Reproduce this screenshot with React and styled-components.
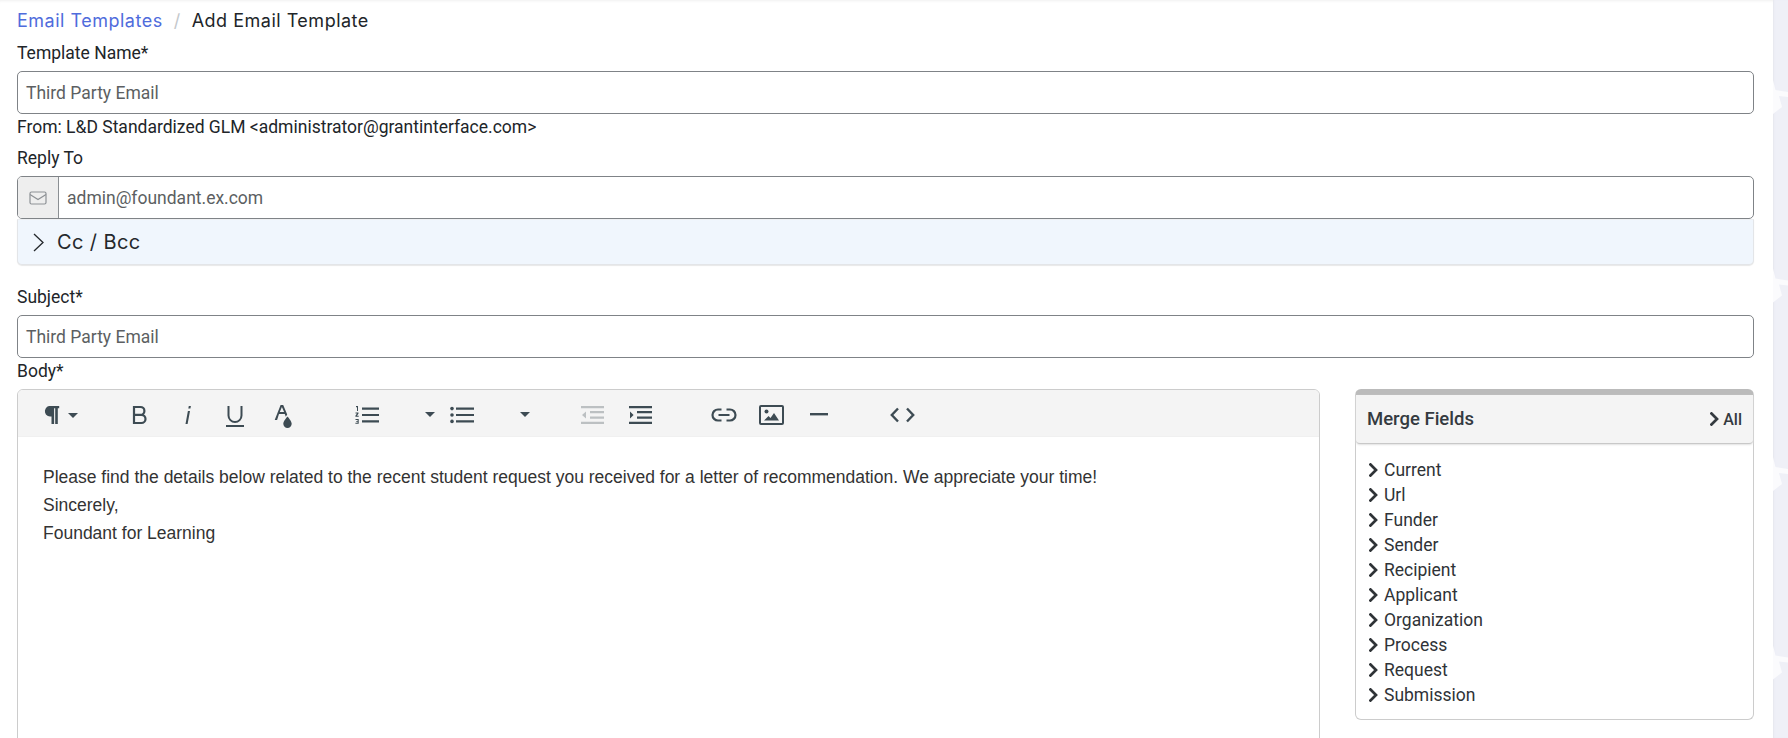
import React from "react";
import styled, { createGlobalStyle } from "styled-components";

const Global = createGlobalStyle`
  html, body { margin: 0; padding: 0; height: 738px; overflow: hidden; background: #fff; }
  #root { height: 738px; }
  * { box-sizing: border-box; }
`;

const Page = styled.div`
  display: flex;
  height: 738px;
  overflow: hidden;
  font-family: Roboto, sans-serif;
  font-size: 17.5px;
  color: #212529;
`;
const Main = styled.main`
  width: 1773px;
  flex: none;
  padding: 0 19px 0 17px;
  background: #fff;
  box-shadow: inset 0 3px 3px -2px #f0f0f0;
`;
const Side = styled.aside`
  flex: 1;
  background: #eff0f7;
  box-shadow: inset 2px 0 2px -1px #e6e7ee;
  line-height: 0;
`;
const Breadcrumb = styled.nav`
  display: flex;
  align-items: center;
  height: 41px;
  padding-bottom: 1px;
  font-family: Inter, sans-serif;
  font-size: 18px;
  letter-spacing: 0.5px;
`;
const Crumb = styled.span`
  color: ${(p) => (p.$link ? "#4f6cdc" : "#212529")};
`;
const Slash = styled.span`
  color: #c4c8cc;
  margin: 0 11px;
`;
const Label = styled.label`
  display: block;
  line-height: 24px;
  margin-bottom: ${(p) => p.$mb ?? 6}px;
`;
const Line = styled.div`
  line-height: 24px;
  margin: 1px 0 7px;
`;
const Input = styled.div`
  height: 43px;
  border: 1px solid #7f8387;
  border-radius: 5px;
  padding: 0 8px;
  display: flex;
  align-items: center;
  color: #5c5f62;
  background: #fff;
  margin-bottom: 1px;
`;
const Group = styled.div`
  display: flex;
  height: 43px;
  border: 1px solid #7f8387;
  border-radius: 5px;
  overflow: hidden;
`;
const Addon = styled.div`
  width: 41px;
  flex: none;
  background: #eeeeee;
  border-right: 1px solid #8b8f93;
  display: flex;
  align-items: center;
  justify-content: center;
`;
const GroupValue = styled.div`
  flex: 1;
  display: flex;
  align-items: center;
  padding: 0 8px;
  color: #5c5f62;
`;
const Collapse = styled.div`
  height: 46px;
  margin-bottom: 20px;
  background: #f0f6fd;
  border: 1px solid #e3e5e8;
  border-top-color: #eef0f3;
  border-radius: 0 0 5px 5px;
  box-shadow: 0 1px 1px #e8e8e8;
  display: flex;
  align-items: center;
  padding-left: 15px;
  gap: 13px;
  font-family: Inter, sans-serif;
  font-size: 20px;
  letter-spacing: 0.4px;
  color: #24282c;
`;
const Columns = styled.div`
  display: flex;
  align-items: flex-start;
`;
const Editor = styled.section`
  width: 1303px;
  flex: none;
  height: 400px;
  border: 1px solid #cccccc;
  border-radius: 6px 6px 0 0;
  margin-right: 35px;
`;
const Toolbar = styled.div`
  display: flex;
  height: 47px;
  padding: 3px 0 0 24px;
  background: #f4f4f4;
  border-radius: 5px 5px 0 0;
  border-bottom: 1px solid #f0f0f0;
  color: #3d4b53;
`;
const ToolGroup = styled.div`
  display: flex;
  margin-left: ${(p) => p.$ml}px;
`;
const Tool = styled.div`
  width: ${(p) => p.$w ?? 47.5}px;
  margin-left: ${(p) => p.$ml ?? 0}px;
  flex: none;
  display: flex;
  align-items: center;
  justify-content: center;
  color: ${(p) => (p.$off ? "#bcc0c2" : "inherit")};
`;
const EditorBody = styled.div`
  padding: 26px 25px 0;
  font-family: "Liberation Sans", Arial, sans-serif;
  font-size: 17.5px;
  line-height: 28px;
  color: #333;
`;
const Panel = styled.section`
  width: 399px;
  flex: none;
  height: 331px;
  border: 1px solid #cccccc;
  border-top: 6px solid #bbbbbb;
  border-radius: 6px;
  background: #fff;
`;
const PanelHeader = styled.header`
  height: 49px;
  background: #f4f4f4;
  border-bottom: 1px solid #c8c8c8;
  box-shadow: 0 1px 2px #e2e2e2;
  border-radius: 0 0 4px 4px;
  display: flex;
  align-items: center;
  justify-content: space-between;
  padding: 0 11px 0 11px;
`;
const PanelTitle = styled.h3`
  margin: 0;
  font-size: 18.5px;
  font-weight: 500;
  color: #343a40;
`;
const AllToggle = styled.span`
  display: flex;
  align-items: center;
  gap: 4px;
  font-size: 16px;
  font-weight: 500;
  color: #343a40;
`;
const FieldList = styled.ul`
  list-style: none;
  margin: 0;
  padding: 13px 0 0 13px;
`;
const FieldItem = styled.li`
  display: flex;
  align-items: center;
  height: 25px;
  gap: 6px;
  color: #2f3337;
`;

const Chevron = () => (
  <svg width="9" height="14" viewBox="0 0 9 14" fill="none" stroke="currentColor" strokeWidth="2.7" strokeLinecap="square">
    <path d="M1.5 1.5 7 7 1.5 12.5" />
  </svg>
);
const ThinChevron = () => (
  <svg width="11" height="19" viewBox="0 0 11 19" fill="none" stroke="currentColor" strokeWidth="1.3">
    <path d="M1 1l9 8.5L1 18" />
  </svg>
);
const Caret = () => (
  <svg width="10" height="5" viewBox="0 0 10 5" fill="currentColor"><path d="M0 0h10L5 5z" /></svg>
);
const Paragraph = () => (
  <svg width="36" height="24" viewBox="0 0 36 24" fill="currentColor">
    <path d="M7 3h10.2v2.2h-1.4V21h-2.6V5.2h-1.1V21H9.5v-7.6A5.3 5.3 0 0 1 7 3z" />
    <path d="M26 10h10l-5 5z" />
  </svg>
);
const Bold = () => (
  <svg width="24" height="24" viewBox="0 0 24 24" fill="none" stroke="currentColor" strokeWidth="2.2">
    <path d="M6 4h6.5a3.9 3.9 0 0 1 0 7.8H6zM6 11.8h7.4a4 4 0 0 1 0 8.2H6z" />
  </svg>
);
const Italic = () => (
  <svg width="24" height="24" viewBox="0 0 24 24" fill="currentColor">
    <path d="M12.8 3h2.1l-.5 2.4h-2.1zM11.9 8h2.1l-2.4 13H9.5z" />
  </svg>
);
const Underline = () => (
  <svg width="24" height="24" viewBox="0 0 24 24" fill="none" stroke="currentColor" strokeWidth="2">
    <path d="M5.5 3v9.5a6.5 6.5 0 0 0 13 0V3" />
    <path d="M3 23h18" />
  </svg>
);
const TextColor = () => (
  <svg width="24" height="26" viewBox="0 0 24 26" fill="currentColor">
    <path d="M9.6 3h2.6l4 9.5-1.4 2.3L13.8 12H8l-1.9 6H3.7zM8.8 10h4.3l-2.2-5z" />
    <path d="M16.5 14.5s4.2 4.7 4.2 7.3a4.2 4.2 0 0 1-8.4 0c0-2.6 4.2-7.3 4.2-7.3z" />
  </svg>
);
const OrderedList = () => (
  <svg width="24" height="18" viewBox="0 0 24 18" fill="currentColor">
    <path d="M7 1.5h17v2.2H7zM7 7.9h17v2.2H7zM7 14.3h17v2.2H7z" />
    <path d="M1 0h2v5H2V1.2H1zM.5 6.5h3v1L2 9.8h1.7v1H.4v-1L2 7.5H.5zM.5 13h3.2v4.8H.4v-1h2.2v-1H1.2v-.9h1.4v-1H.5z" />
  </svg>
);
const BulletList = () => (
  <svg width="24" height="18" viewBox="0 0 24 18" fill="currentColor">
    <path d="M6 1.5h18v2.2H6zM6 7.9h18v2.2H6zM6 14.3h18v2.2H6z" />
    <circle cx="2" cy="2.6" r="1.8" /><circle cx="2" cy="9" r="1.8" /><circle cx="2" cy="15.4" r="1.8" />
  </svg>
);
const Outdent = () => (
  <svg width="23" height="18" viewBox="0 0 23 18" fill="currentColor">
    <path d="M0 0h23v2.2H0zM0 15.8h23v2.2H0zM9 5h14v2.2H9zM9 10.6h14v2.2H9zM5 5.6v6.8L1 9z" />
  </svg>
);
const Indent = () => (
  <svg width="23" height="18" viewBox="0 0 23 18" fill="currentColor">
    <path d="M0 0h23v2.2H0zM0 15.8h23v2.2H0zM8 5h15v2.2H8zM8 10.6h15v2.2H8zM1 5.6v6.8L4.6 9z" />
  </svg>
);
const LinkIcon = () => (
  <svg width="26" height="14" viewBox="0 0 26 14" fill="none" stroke="currentColor" strokeWidth="2.2">
    <path d="M10.5 1.5H7a5.5 5.5 0 0 0 0 11h3.5M15.5 1.5H19a5.5 5.5 0 0 1 0 11h-3.5M7.5 7h11" />
  </svg>
);
const ImageIcon = () => (
  <svg width="25" height="20" viewBox="0 0 25 20" fill="none">
    <rect x="1" y="1" width="23" height="18" rx="1" stroke="currentColor" strokeWidth="2" />
    <circle cx="7.5" cy="6.5" r="2" fill="currentColor" />
    <path d="M5 15.5l4.5-4.5 2 2 3.5-5 5 7.5z" fill="currentColor" />
  </svg>
);
const Rule = () => (
  <svg width="18" height="3" viewBox="0 0 18 3" fill="currentColor"><rect width="18" height="2.4" /></svg>
);
const CodeIcon = () => (
  <svg width="25" height="16" viewBox="0 0 25 16" fill="none" stroke="currentColor" strokeWidth="2.4">
    <path d="M8 1.5 1.8 8 8 14.5M17 1.5 23.2 8 17 14.5" />
  </svg>
);
const Envelope = () => (
  <svg width="18" height="14" viewBox="0 0 18 14" fill="none" stroke="#8d9195" strokeWidth="1.2">
    <rect x="1" y="1" width="16" height="12" rx="1.5" />
    <path d="M1 3.5 9 8.5l8-5" />
  </svg>
);
const Backdrop = () => (
  <svg width="15" height="738" viewBox="0 0 15 738">
    {[0, 188.5, 377, 565.5].map((y) => (
      <g key={y} transform={`translate(0 ${y})`} fill="#fbfbfd">
        <path d="M0 80l2.5 10L15 92v5L6 96l3 11-9 7z" />
      </g>
    ))}
  </svg>
);

const fields = ["Current", "Url", "Funder", "Sender", "Recipient", "Applicant", "Organization", "Process", "Request", "Submission"];

export default function App() {
  return (
    <Page>
      <Global />
      <Main>
        <Breadcrumb>
          <Crumb $link>Email Templates</Crumb>
          <Slash>/</Slash>
          <Crumb>Add Email Template</Crumb>
        </Breadcrumb>
        <Label>Template Name*</Label>
        <Input>Third Party Email</Input>
        <Line>From: L&amp;D Standardized GLM &lt;administrator@grantinterface.com&gt;</Line>
        <Label>Reply To</Label>
        <Group>
          <Addon><Envelope /></Addon>
          <GroupValue>admin@foundant.ex.com</GroupValue>
        </Group>
        <Collapse>
          <ThinChevron />
          Cc / Bcc
        </Collapse>
        <Label>Subject*</Label>
        <Input>Third Party Email</Input>
        <Label>Body*</Label>
        <Columns>
          <Editor>
            <Toolbar>
              <ToolGroup $ml={0}><Tool $w={36}><Paragraph /></Tool></ToolGroup>
              <ToolGroup $ml={38.25}>
                <Tool><Bold /></Tool>
                <Tool><Italic /></Tool>
                <Tool><Underline /></Tool>
                <Tool><TextColor /></Tool>
              </ToolGroup>
              <ToolGroup $ml={36.75}>
                <Tool $w={48}><OrderedList /></Tool>
                <Tool $w={16} $ml={31}><Caret /></Tool>
                <Tool $w={48}><BulletList /></Tool>
                <Tool $w={16} $ml={31}><Caret /></Tool>
              </ToolGroup>
              <ToolGroup $ml={35}>
                <Tool $w={48} $off><Outdent /></Tool>
                <Tool $w={48}><Indent /></Tool>
              </ToolGroup>
              <ToolGroup $ml={36.25}>
                <Tool><LinkIcon /></Tool>
                <Tool><ImageIcon /></Tool>
                <Tool><Rule /></Tool>
              </ToolGroup>
              <ToolGroup $ml={35.25}><Tool $w={48}><CodeIcon /></Tool></ToolGroup>
            </Toolbar>
            <EditorBody>
              <div>Please find the details below related to the recent student request you received for a letter of recommendation. We appreciate your time!</div>
              <div>Sincerely,</div>
              <div>Foundant for Learning</div>
            </EditorBody>
          </Editor>
          <Panel>
            <PanelHeader>
              <PanelTitle>Merge Fields</PanelTitle>
              <AllToggle><Chevron />All</AllToggle>
            </PanelHeader>
            <FieldList>
              {fields.map((f) => (
                <FieldItem key={f}><Chevron />{f}</FieldItem>
              ))}
            </FieldList>
          </Panel>
        </Columns>
      </Main>
      <Side><Backdrop /></Side>
    </Page>
  );
}
